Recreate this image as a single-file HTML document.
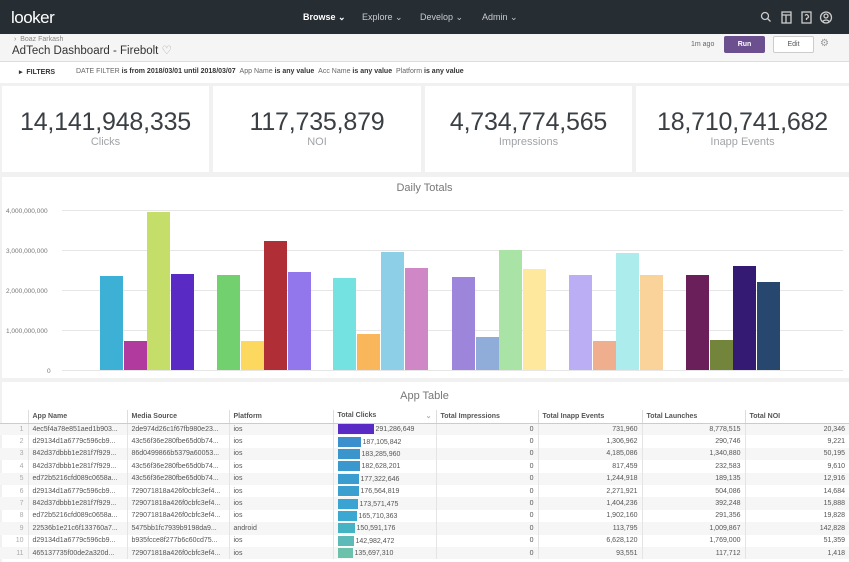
<!DOCTYPE html>
<html><head><meta charset="utf-8"><style>
*{box-sizing:border-box;margin:0;padding:0}
body{width:849px;height:562px;overflow:hidden;background:#f1f1f2;font-family:"Liberation Sans",sans-serif;position:relative;color:#3a3f45}
.abs{position:absolute}
.nav{left:0;top:0;width:849px;height:34px;background:#262d33}
.nav span{position:absolute;top:12px;font-size:9px;color:#c8ccd0}
.hdr{left:0;top:34px;width:849px;height:28px;background:#f5f5f5;border-bottom:1px solid #ddd}
.flt{left:0;top:62px;width:849px;height:21px;background:#fff;font-size:7px;color:#666}
.flt b{color:#333}
.card{top:86px;height:86px;background:#fff;text-align:center}
.card .n{margin-top:22px;font-size:25px;color:#3a3f44;font-weight:normal;letter-spacing:-0.2px}
.card .l{font-size:11px;color:#a0a4a8;margin-top:-1px}
.panel{background:#fff}
table{border-collapse:collapse;font-size:7px;color:#555;position:absolute;left:0;top:410px;width:849px}
td,th{height:12.4px;padding:0 4px;white-space:nowrap;overflow:hidden}
th{text-align:left;font-weight:bold;color:#555;border-left:1px solid #ddd;height:13px;border-bottom:1px solid #ccc}
tr:nth-child(even) td{background:#f6f6f6}
td.r{text-align:right}
td{border-left:1px solid #e4e4e4}
td:first-child{border-left:none;color:#aaa;text-align:right;width:27px}
.bar{display:inline-block;height:10px;vertical-align:middle;margin-right:2px}
</style></head><body>
<div class="abs nav">
<div class="abs" style="left:11px;top:8px;font-size:17px;color:#fff;font-weight:300;letter-spacing:-0.5px">looker</div>
<span style="left:303px;color:#fff;font-weight:bold">Browse ⌄</span>
<span style="left:362px">Explore ⌄</span>
<span style="left:420px">Develop ⌄</span>
<span style="left:482px">Admin ⌄</span>
<svg class="abs" style="left:760px;top:11px" width="80" height="13" fill="none" stroke="#ccc" stroke-width="1.3"><circle cx="5" cy="5" r="3.5"/><path d="M7.5 7.5l3 3"/><rect x="22" y="1" width="9" height="11"/><path d="M22 4h9M26 4v8"/><rect x="42" y="1" width="9" height="11"/><path d="M45 4.5q1.5-2 3 0t-1.5 3v1.5"/><circle cx="66" cy="6.5" r="5.5"/><circle cx="66" cy="5" r="2"/><path d="M62.5 10.5q3.5-3 7 0"/></svg>
</div>
<div class="abs hdr">
<div class="abs" style="left:14px;top:2px;font-size:7px;color:#888">›&nbsp; Boaz Farkash</div>
<div class="abs" style="left:12px;top:9px;font-size:11.5px;color:#333">AdTech Dashboard - Firebolt <span style="color:#999">♡</span></div>
<div class="abs" style="left:691px;top:7px;font-size:7px;color:#666">1m ago</div>
<div class="abs" style="left:724px;top:2px;width:41px;height:17px;background:#6b4f8f;border-radius:2px;color:#fff;font-size:7px;text-align:center;line-height:17px;font-weight:bold">Run</div>
<div class="abs" style="left:773px;top:2px;width:41px;height:17px;background:#fff;border:1px solid #ccc;border-radius:2px;color:#555;font-size:7px;text-align:center;line-height:15px">Edit</div>
<div class="abs" style="left:820px;top:4px;font-size:10px;color:#999">⚙</div>
</div>
<div class="abs flt"><div class="abs" style="left:19px;top:6px"><b>▸ &nbsp;FILTERS</b></div>
<div class="abs" style="left:76px;top:6px">DATE FILTER <b>is from 2018/03/01 until 2018/03/07</b> &nbsp;App Name <b>is any value</b> &nbsp;Acc Name <b>is any value</b> &nbsp;Platform <b>is any value</b></div></div>
<div class="abs card" style="left:2px;width:207px"><div class="n">14,141,948,335</div><div class="l">Clicks</div></div>
<div class="abs card" style="left:213px;width:208px"><div class="n">117,735,879</div><div class="l">NOI</div></div>
<div class="abs card" style="left:425px;width:207px"><div class="n">4,734,774,565</div><div class="l">Impressions</div></div>
<div class="abs card" style="left:636px;width:213px"><div class="n">18,710,741,682</div><div class="l">Inapp Events</div></div>
<div class="abs panel" style="left:2px;top:177px;width:847px;height:201px"></div>
<div class="abs" style="left:0;top:182px;width:849px;text-align:center;font-size:11px;color:#777">Daily Totals</div>
<svg class="abs" style="left:0;top:200px" width="849" height="178">
<g stroke="#e6e6e6" stroke-width="1"><path d="M62 10.5H843M62 50.5H843M62 90.5H843M62 130.5H843M62 170.5H843"/></g>
<g font-size="6.5" fill="#777" font-family="Liberation Sans"><text x="6" y="13">4,000,000,000</text><text x="6" y="53">3,000,000,000</text><text x="6" y="93">2,000,000,000</text><text x="6" y="133">1,000,000,000</text><text x="47" y="173">0</text></g>
<g>
<rect x="100" y="76" width="23" height="94" fill="#3db0d6"/><rect x="124" y="141" width="23" height="29" fill="#b03a9e"/><rect x="147" y="12" width="23" height="158" fill="#c5de6a"/><rect x="171" y="74" width="23" height="96" fill="#5a2bc4"/>
<rect x="217" y="75" width="23" height="95" fill="#72d16e"/><rect x="241" y="141" width="23" height="29" fill="#fcd95e"/><rect x="264" y="41" width="23" height="129" fill="#b02e36"/><rect x="288" y="72" width="23" height="98" fill="#9276ec"/>
<rect x="333" y="78" width="23" height="92" fill="#74e2e0"/><rect x="357" y="134" width="23" height="36" fill="#fab65a"/><rect x="381" y="52" width="23" height="118" fill="#8ecfe8"/><rect x="405" y="68" width="23" height="102" fill="#d087c5"/>
<rect x="452" y="77" width="23" height="93" fill="#9e85dc"/><rect x="476" y="137" width="23" height="33" fill="#8fadd8"/><rect x="499" y="50" width="23" height="120" fill="#aae3a6"/><rect x="523" y="69" width="23" height="101" fill="#fde89e"/>
<rect x="569" y="75" width="23" height="95" fill="#bcaef5"/><rect x="593" y="141" width="23" height="29" fill="#efaf8e"/><rect x="616" y="53" width="23" height="117" fill="#aceced"/><rect x="640" y="75" width="23" height="95" fill="#fad39a"/>
<rect x="686" y="75" width="23" height="95" fill="#6a1f5a"/><rect x="710" y="140" width="23" height="30" fill="#72853a"/><rect x="733" y="66" width="23" height="104" fill="#341a73"/><rect x="757" y="82" width="23" height="88" fill="#27476e"/>
</g></svg>
<div class="abs panel" style="left:2px;top:382px;width:847px;height:180px"></div>
<div class="abs" style="left:0;top:390px;width:849px;text-align:center;font-size:11px;color:#777">App Table</div>
<table>
<colgroup><col style="width:28px"><col style="width:99px"><col style="width:102px"><col style="width:104px"><col style="width:103px"><col style="width:102px"><col style="width:104px"><col style="width:103px"><col style="width:104px"></colgroup>
<tr><th style="border:none;border-bottom:1px solid #ccc"></th><th>App Name</th><th>Media Source</th><th>Platform</th><th>Total Clicks <span style="float:right;color:#aaa">⌄</span></th><th>Total Impressions</th><th>Total Inapp Events</th><th>Total Launches</th><th>Total NOI</th></tr>
<tr><td>1</td><td>4ec5f4a78e851aed1b903...</td><td>2de974d26c1f67fb980e23...</td><td>ios</td><td><span class="bar" style="width:36px;background:#5a2bc4"></span>291,286,649</td><td class="r">0</td><td class="r">731,960</td><td class="r">8,778,515</td><td class="r">20,346</td></tr>
<tr><td>2</td><td>d29134d1a6779c596cb9...</td><td>43c56f36e280fbe65d0b74...</td><td>ios</td><td><span class="bar" style="width:23px;background:#3b8fcc"></span>187,105,842</td><td class="r">0</td><td class="r">1,306,962</td><td class="r">290,746</td><td class="r">9,221</td></tr>
<tr><td>3</td><td>842d37dbbb1e281f7f929...</td><td>86d0499866b5379a60053...</td><td>ios</td><td><span class="bar" style="width:22px;background:#3b95cd"></span>183,285,960</td><td class="r">0</td><td class="r">4,185,086</td><td class="r">1,340,880</td><td class="r">50,195</td></tr>
<tr><td>4</td><td>842d37dbbb1e281f7f929...</td><td>43c56f36e280fbe65d0b74...</td><td>ios</td><td><span class="bar" style="width:22px;background:#3b98ce"></span>182,628,201</td><td class="r">0</td><td class="r">817,459</td><td class="r">232,583</td><td class="r">9,610</td></tr>
<tr><td>5</td><td>ed72b5216cfd089c0658a...</td><td>43c56f36e280fbe65d0b74...</td><td>ios</td><td><span class="bar" style="width:21px;background:#3b9cd0"></span>177,322,646</td><td class="r">0</td><td class="r">1,244,918</td><td class="r">189,135</td><td class="r">12,916</td></tr>
<tr><td>6</td><td>d29134d1a6779c596cb9...</td><td>729071818a426f0cbfc3ef4...</td><td>ios</td><td><span class="bar" style="width:21px;background:#3b9fd0"></span>176,564,819</td><td class="r">0</td><td class="r">2,271,921</td><td class="r">504,086</td><td class="r">14,684</td></tr>
<tr><td>7</td><td>842d37dbbb1e281f7f929...</td><td>729071818a426f0cbfc3ef4...</td><td>ios</td><td><span class="bar" style="width:20px;background:#3ba3d1"></span>173,571,475</td><td class="r">0</td><td class="r">1,404,236</td><td class="r">392,248</td><td class="r">15,888</td></tr>
<tr><td>8</td><td>ed72b5216cfd089c0658a...</td><td>729071818a426f0cbfc3ef4...</td><td>ios</td><td><span class="bar" style="width:19px;background:#3ba8d2"></span>165,710,363</td><td class="r">0</td><td class="r">1,902,160</td><td class="r">291,356</td><td class="r">19,828</td></tr>
<tr><td>9</td><td>22536b1e21c6f133760a7...</td><td>5475bb1fc7939b9198da9...</td><td>android</td><td><span class="bar" style="width:17px;background:#46b3c4"></span>150,591,176</td><td class="r">0</td><td class="r">113,795</td><td class="r">1,009,867</td><td class="r">142,828</td></tr>
<tr><td>10</td><td>d29134d1a6779c596cb9...</td><td>b935fcce8f277b6c60cd75...</td><td>ios</td><td><span class="bar" style="width:16px;background:#5cbab8"></span>142,982,472</td><td class="r">0</td><td class="r">6,628,120</td><td class="r">1,769,000</td><td class="r">51,359</td></tr>
<tr><td>11</td><td>465137735f00de2a320d...</td><td>729071818a426f0cbfc3ef4...</td><td>ios</td><td><span class="bar" style="width:15px;background:#6cc1aa"></span>135,697,310</td><td class="r">0</td><td class="r">93,551</td><td class="r">117,712</td><td class="r">1,418</td></tr>
</table>
</body></html>
